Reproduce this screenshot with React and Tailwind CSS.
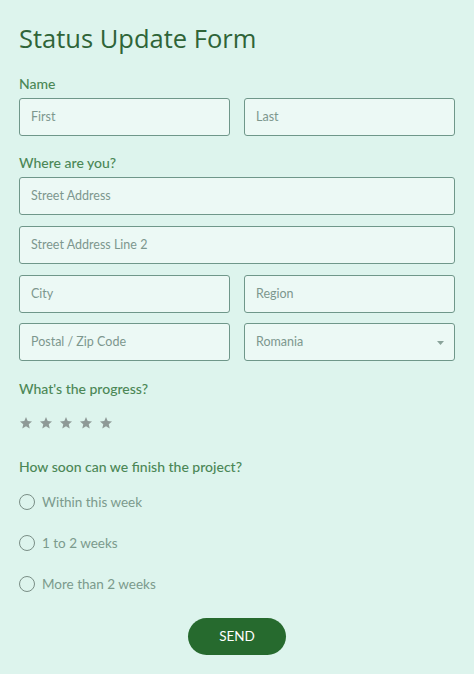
import React from "react";

const font = { fontFamily: "Lato, 'Open Sans', sans-serif" };

function Field({ placeholder, select, className = "" }) {
  return (
    <div
      className={
        "relative flex h-[38px] shrink-0 items-center rounded-[3px] border border-[#6f978a] bg-[#ecf9f5] px-[11px] " +
        className
      }
    >
      <span className="text-[12.5px] text-[#7d978e]">{placeholder}</span>
      {select && (
        <svg className="absolute right-[10px] top-[17px]" width="7" height="4" viewBox="0 0 7 4">
          <path d="M0 0 L7 0 L3.5 4 Z" fill="#8aa39a" />
        </svg>
      )}
    </div>
  );
}

function Star() {
  return (
    <svg width="14" height="14" viewBox="0 0 24 24">
      <path
        d="M12 1.8 L14.9 8.6 L22.3 9.3 L16.7 14.2 L18.4 21.5 L12 17.7 L5.6 21.5 L7.3 14.2 L1.7 9.3 L9.1 8.6 Z"
        fill="#8f9a97"
      />
    </svg>
  );
}

function Radio({ label }) {
  return (
    <div className="flex h-[20px] items-center gap-[7px]">
      <div className="h-[16px] w-[16px] rounded-full border-[1.5px] border-[#7a8e86] bg-transparent" />
      <span className="text-[13.5px] text-[#7b9a8c]">{label}</span>
    </div>
  );
}

function Label({ children, className = "" }) {
  return (
    <div className={"text-[14px] leading-[16px] font-medium text-[#4b8756] " + className}>{children}</div>
  );
}

export default function App() {
  return (
    <div style={font} className="min-h-[674px] w-[474px] bg-[#ddf4ed] px-[19px] pt-[20px]">
      <h1
        style={{ fontFamily: "'Open Sans', sans-serif" }}
        className="text-[25.5px] leading-[36px] font-normal text-[#2f6438]"
      >
        Status Update Form
      </h1>

      <Label className="mt-[20px]">Name</Label>
      <div className="mt-[6px] flex gap-[14px]">
        <Field placeholder="First" className="flex-1" />
        <Field placeholder="Last" className="flex-1" />
      </div>

      <Label className="mt-[19px]">Where are you?</Label>
      <div className="mt-[6px] flex flex-col gap-[11px]">
        <Field placeholder="Street Address" className="w-full" />
        <Field placeholder="Street Address Line 2" className="w-full" />
        <div className="flex gap-[14px]">
          <Field placeholder="City" className="flex-1" />
          <Field placeholder="Region" className="flex-1" />
        </div>
        <div className="mt-[-1px] flex gap-[14px]">
          <Field placeholder="Postal / Zip Code" className="flex-1" />
          <Field placeholder="Romania" select className="flex-1" />
        </div>
      </div>

      <Label className="mt-[20px]">What's the progress?</Label>
      <div className="mt-[19px] flex gap-[6px]">
        <Star />
        <Star />
        <Star />
        <Star />
        <Star />
      </div>

      <Label className="mt-[29px]">How soon can we finish the project?</Label>
      <div className="mt-[17px] flex flex-col gap-[21px]">
        <Radio label="Within this week" />
        <Radio label="1 to 2 weeks" />
        <Radio label="More than 2 weeks" />
      </div>

      <div className="mt-[24px] flex justify-center">
        <button className="h-[37px] w-[98px] rounded-full bg-[#266a2e] text-[13.5px] text-white">SEND</button>
      </div>
    </div>
  );
}
